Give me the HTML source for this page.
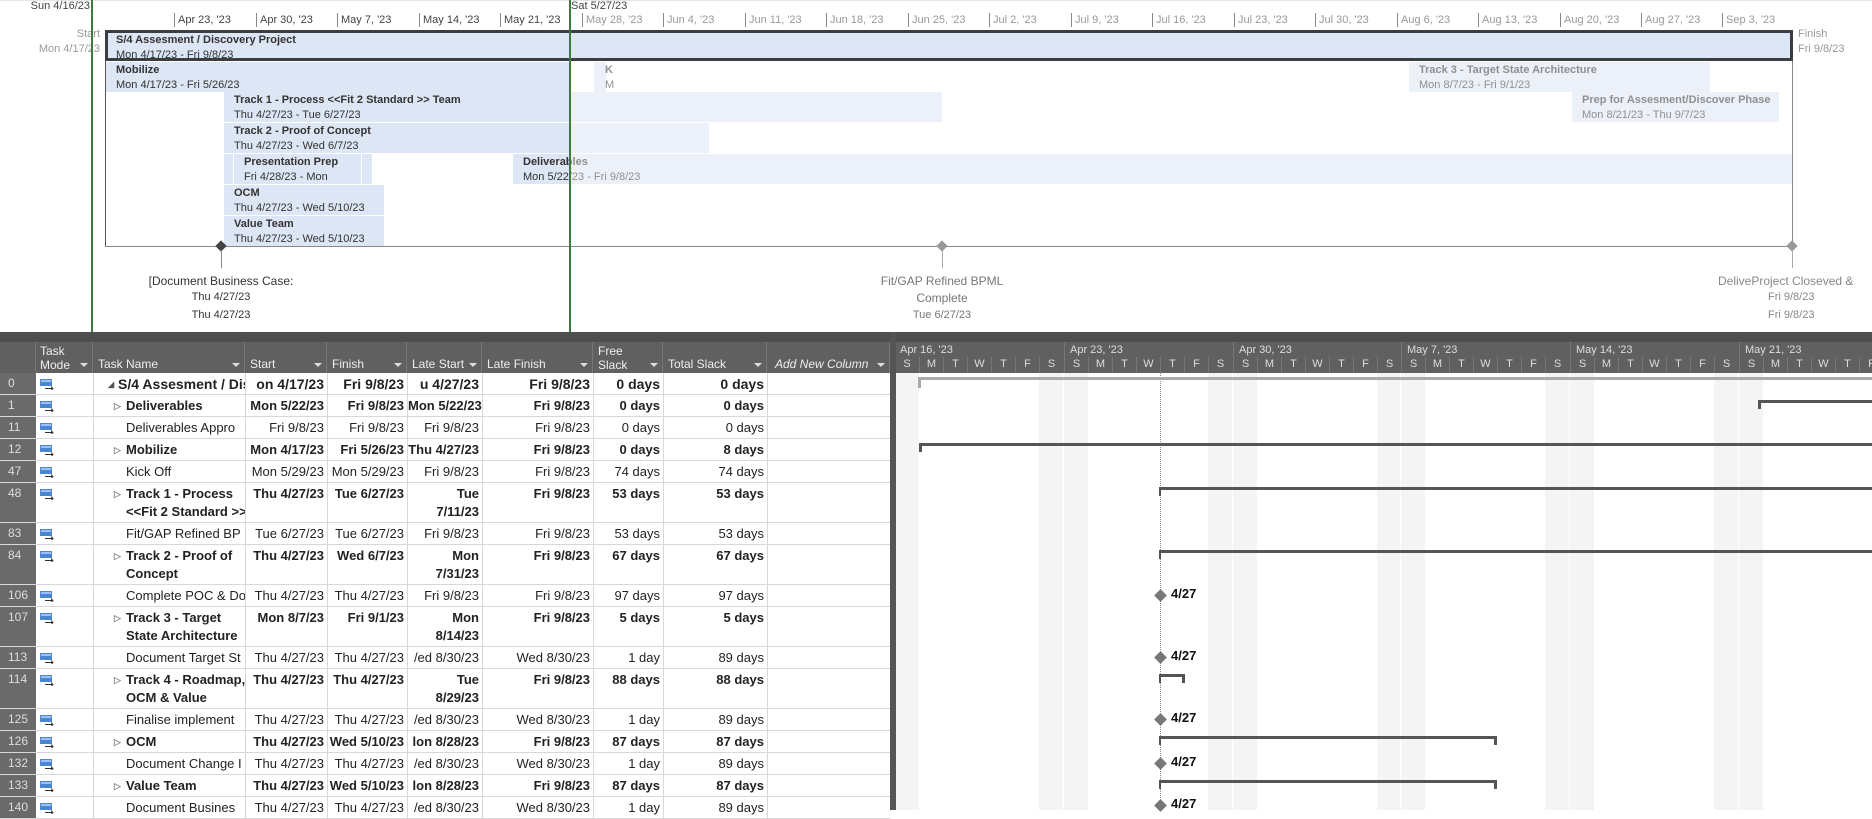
<!DOCTYPE html>
<html><head><meta charset="utf-8"><style>
*{margin:0;padding:0;box-sizing:border-box}
body{width:1872px;height:810px;overflow:hidden;background:#fff;font-family:"Liberation Sans",sans-serif;position:relative}
.a{position:absolute}
.bar{position:absolute;background:#dce6f4;font-size:11px;color:#333;padding-left:10px;line-height:15px;padding-top:1px;overflow:hidden;white-space:nowrap}
.bar b{display:block;font-weight:bold}
.dl{position:absolute;top:13px;font-size:11px;color:#444;padding-left:3px;border-left:1px solid #888;height:14px;line-height:14px;white-space:nowrap}
.g{color:#999}
.lbl{position:absolute;font-size:12px;color:#555;text-align:center;white-space:nowrap}
.hd{position:absolute;top:342px;height:31px;background:#606060;color:#eee;font-size:12px}
.hc{position:absolute;top:342px;height:31px;color:#eee;font-size:12px;line-height:14px;border-right:1px solid #777}
.hc i.dd{position:absolute;right:4px;bottom:6px;width:0;height:0;border-left:4px solid transparent;border-right:4px solid transparent;border-top:4px solid #ddd}
.row{position:absolute;left:0;width:890px;border-bottom:1px solid #d8d8d8;font-size:13px;line-height:18px;color:#222}
.row div{position:absolute;top:2px;white-space:nowrap;overflow:hidden}
.id{left:0;width:36px;top:0!important;height:100%;background:#6a6a6a;color:#ddd;padding-left:8px;padding-top:1px;font-size:12px}
.ic{left:40px;width:15px;height:12px;top:5px!important}
.nm{left:93px;width:152px;padding-left:32px;border-left:1px solid #d8d8d8;top:0!important;height:100%;padding-top:2px}
.c{text-align:right;top:0!important;height:100%;padding-top:2px;border-left:1px solid #d8d8d8;padding-right:3px}
.s{left:245px;width:82px}.f{left:327px;width:80px}.ls{left:407px;width:75px}.lf{left:482px;width:111px}.fs{left:593px;width:70px}.ts{left:663px;width:104px}.ad{left:767px;width:123px}
.bd{font-weight:bold}
.tri{position:absolute;left:115px;font-size:9px;color:#888}
.day{position:absolute;top:357px;width:24px;height:16px;font-size:11px;color:#ddd;text-align:center;border-left:1px solid #777;line-height:15px}
.wk{position:absolute;top:342px;font-size:11px;color:#ddd;padding-left:5px;height:15px;line-height:16px;border-left:1px solid #777}
.hl{position:absolute;height:3px;background:#555}
.tk{position:absolute;width:3px;height:9px;background:#555}
.dm{position:absolute;width:9px;height:9px;background:#777;transform:rotate(45deg)}
.mt{position:absolute;font-size:13px;font-weight:bold;color:#111}
</style></head><body>

<!-- TIMELINE -->
<div class="a" style="left:0;top:0;width:1872px;height:1px;background:#e6e6e6"></div>
<div class="a" style="left:0;top:0;width:92px;font-size:11px;color:#444;text-align:right;padding-right:2px">Sun 4/16/23</div>
<div class="a" style="left:571px;top:0;font-size:11px;color:#444">Sat 5/27/23</div>

<div class="dl" style="left:174px">Apr 23, '23</div>
<div class="dl" style="left:256px">Apr 30, '23</div>
<div class="dl" style="left:337px">May 7, '23</div>
<div class="dl" style="left:419px">May 14, '23</div>
<div class="dl" style="left:500px">May 21, '23</div>
<div class="dl g" style="left:582px">May 28, '23</div>
<div class="dl g" style="left:663px">Jun 4, '23</div>
<div class="dl g" style="left:745px">Jun 11, '23</div>
<div class="dl g" style="left:826px">Jun 18, '23</div>
<div class="dl g" style="left:908px">Jun 25, '23</div>
<div class="dl g" style="left:989px">Jul 2, '23</div>
<div class="dl g" style="left:1071px">Jul 9, '23</div>
<div class="dl g" style="left:1152px">Jul 16, '23</div>
<div class="dl g" style="left:1234px">Jul 23, '23</div>
<div class="dl g" style="left:1315px">Jul 30, '23</div>
<div class="dl g" style="left:1397px">Aug 6, '23</div>
<div class="dl g" style="left:1478px">Aug 13, '23</div>
<div class="dl g" style="left:1560px">Aug 20, '23</div>
<div class="dl g" style="left:1641px">Aug 27, '23</div>
<div class="dl g" style="left:1722px">Sep 3, '23</div>

<div class="a" style="left:0;top:27px;width:100px;font-size:11px;color:#999;text-align:right;line-height:15px">Start<br>Mon 4/17/23</div>
<div class="a" style="left:1798px;top:27px;font-size:11px;color:#999;line-height:15px">Finish<br>Fri 9/8/23</div>

<!-- outline -->
<div class="a" style="left:105px;top:30px;width:1px;height:217px;background:#555"></div>
<div class="a" style="left:105px;top:246px;width:1688px;height:1px;background:#888"></div>
<div class="a" style="left:1792px;top:30px;width:1px;height:217px;background:#888"></div>

<div class="bar" style="left:105px;top:30px;width:1688px;height:31px;border:3px solid #3a3d42;padding-left:8px;padding-top:0"><b>S/4 Assesment / Discovery Project</b>Mon 4/17/23 - Fri 9/8/23</div>
<div class="bar" style="left:106px;top:62px;width:464px;height:30px"><b>Mobilize</b>Mon 4/17/23 - Fri 5/26/23</div>
<div class="bar" style="left:594px;top:62px;width:12px;height:30px;padding-left:11px;overflow:visible"><b>K</b>M</div>
<div class="bar" style="left:1409px;top:62px;width:301px;height:30px"><b>Track 3 - Target State Architecture</b>Mon 8/7/23 - Fri 9/1/23</div>
<div class="bar" style="left:224px;top:92px;width:718px;height:30px"><b>Track 1 - Process &lt;&lt;Fit 2 Standard &gt;&gt; Team</b>Thu 4/27/23 - Tue 6/27/23</div>
<div class="bar" style="left:1572px;top:92px;width:207px;height:30px"><b>Prep for Assesment/Discover Phase</b>Mon 8/21/23 - Thu 9/7/23</div>
<div class="bar" style="left:224px;top:123px;width:485px;height:30px"><b>Track 2 - Proof of Concept</b>Thu 4/27/23 - Wed 6/7/23</div>
<div class="bar" style="left:224px;top:154px;width:148px;height:30px;padding-left:20px"><b>Presentation Prep</b>Fri 4/28/23 - Mon</div>
<div class="a" style="left:361px;top:154px;width:1px;height:30px;background:#fff"></div>
<div class="a" style="left:233px;top:154px;width:1px;height:30px;background:#fff"></div>
<div class="bar" style="left:513px;top:154px;width:1279px;height:30px"><b>Deliverables</b>Mon 5/22/23 - Fri 9/8/23</div>
<div class="bar" style="left:224px;top:185px;width:160px;height:30px"><b>OCM</b>Thu 4/27/23 - Wed 5/10/23</div>
<div class="bar" style="left:224px;top:216px;width:160px;height:30px"><b>Value Team</b>Thu 4/27/23 - Wed 5/10/23</div>

<!-- fade overlays -->
<div class="a" style="left:571px;top:62px;width:1221px;height:184px;background:rgba(255,255,255,0.45)"></div>

<!-- green lines -->
<div class="a" style="left:91px;top:0;width:2px;height:332px;background:#3d7a3d"></div>
<div class="a" style="left:569px;top:0;width:2px;height:332px;background:#3d7a3d"></div>

<!-- milestones -->
<div class="a" style="left:217px;top:242px;width:8px;height:8px;background:#444;transform:rotate(45deg)"></div>
<div class="a" style="left:221px;top:250px;width:1px;height:18px;background:#888"></div>
<div class="a" style="left:938px;top:242px;width:8px;height:8px;background:#999;transform:rotate(45deg)"></div>
<div class="a" style="left:942px;top:250px;width:1px;height:18px;background:#aaa"></div>
<div class="a" style="left:1788px;top:242px;width:8px;height:8px;background:#999;transform:rotate(45deg)"></div>
<div class="a" style="left:1792px;top:250px;width:1px;height:18px;background:#aaa"></div>

<div class="lbl" style="left:121px;top:274px;width:200px;color:#333">[Document Business Case:</div>
<div class="lbl" style="left:121px;top:291px;width:200px;font-size:11px;color:#333">Thu 4/27/23</div>
<div class="lbl" style="left:121px;top:309px;width:200px;font-size:11px;color:#333">Thu 4/27/23</div>
<div class="lbl" style="left:842px;top:274px;width:200px;color:#777">Fit/GAP Refined BPML</div>
<div class="lbl" style="left:842px;top:291px;width:200px;color:#777">Complete</div>
<div class="lbl" style="left:842px;top:309px;width:200px;font-size:11px;color:#777">Tue 6/27/23</div>
<div class="lbl" style="left:1718px;top:274px;color:#888;text-align:left">DeliveProject Closeved &amp;</div>
<div class="lbl" style="left:1768px;top:291px;font-size:11px;color:#888;text-align:left">Fri 9/8/23</div>
<div class="lbl" style="left:1768px;top:309px;font-size:11px;color:#888;text-align:left">Fri 9/8/23</div>

<!-- separator -->
<div class="a" style="left:0;top:332px;width:1872px;height:10px;background:#4e4e4e"></div>
<div class="a" style="left:890px;top:332px;width:6px;height:478px;background:#555"></div>

<!-- table header -->
<div class="hd" style="left:0;width:890px"></div>
<div class="hc" style="left:0;width:36px"></div>
<div class="hc" style="left:36px;width:57px;padding:2px 0 0 4px">Task<br>Mode<i class="dd"></i></div>
<div class="hc" style="left:93px;width:152px;padding:15px 0 0 5px">Task Name<i class="dd"></i></div>
<div class="hc" style="left:245px;width:82px;padding:15px 0 0 5px">Start<i class="dd"></i></div>
<div class="hc" style="left:327px;width:80px;padding:15px 0 0 5px">Finish<i class="dd"></i></div>
<div class="hc" style="left:407px;width:75px;padding:15px 0 0 5px">Late Start<i class="dd"></i></div>
<div class="hc" style="left:482px;width:111px;padding:15px 0 0 5px">Late Finish<i class="dd"></i></div>
<div class="hc" style="left:593px;width:70px;padding:2px 0 0 5px">Free<br>Slack<i class="dd"></i></div>
<div class="hc" style="left:663px;width:104px;padding:15px 0 0 5px">Total Slack<i class="dd"></i></div>
<div class="hc" style="left:767px;width:123px;padding:15px 0 0 8px;font-style:italic">Add New Column<i class="dd"></i></div>

<!-- gantt header -->
<div class="hd" style="left:896px;width:976px"></div>
<div class="wk" style="left:895px;border-left:none">Apr 16, '23</div>
<div class="wk" style="left:1064px">Apr 23, '23</div>
<div class="wk" style="left:1233px">Apr 30, '23</div>
<div class="wk" style="left:1401px">May 7, '23</div>
<div class="wk" style="left:1570px">May 14, '23</div>
<div class="wk" style="left:1739px">May 21, '23</div>
<div class="day" style="left:895px;border-left:none">S</div><div class="day" style="left:919px">M</div><div class="day" style="left:943px">T</div><div class="day" style="left:967px">W</div><div class="day" style="left:991px">T</div><div class="day" style="left:1015px">F</div><div class="day" style="left:1039px">S</div>
<div class="day" style="left:1064px">S</div><div class="day" style="left:1088px">M</div><div class="day" style="left:1112px">T</div><div class="day" style="left:1136px">W</div><div class="day" style="left:1160px">T</div><div class="day" style="left:1184px">F</div><div class="day" style="left:1208px">S</div>
<div class="day" style="left:1233px">S</div><div class="day" style="left:1257px">M</div><div class="day" style="left:1281px">T</div><div class="day" style="left:1305px">W</div><div class="day" style="left:1329px">T</div><div class="day" style="left:1353px">F</div><div class="day" style="left:1377px">S</div>
<div class="day" style="left:1401px">S</div><div class="day" style="left:1425px">M</div><div class="day" style="left:1449px">T</div><div class="day" style="left:1473px">W</div><div class="day" style="left:1497px">T</div><div class="day" style="left:1521px">F</div><div class="day" style="left:1545px">S</div>
<div class="day" style="left:1570px">S</div><div class="day" style="left:1594px">M</div><div class="day" style="left:1618px">T</div><div class="day" style="left:1642px">W</div><div class="day" style="left:1666px">T</div><div class="day" style="left:1690px">F</div><div class="day" style="left:1714px">S</div>
<div class="day" style="left:1739px">S</div><div class="day" style="left:1763px">M</div><div class="day" style="left:1787px">T</div><div class="day" style="left:1811px">W</div><div class="day" style="left:1835px">T</div><div class="day" style="left:1859px">F</div>

<!-- weekend shading -->
<div class="a" style="left:896px;top:373px;width:23px;height:437px;background:#f4f4f4"></div>
<div class="a" style="left:1039px;top:373px;width:49px;height:437px;background:#f4f4f4"></div>
<div class="a" style="left:1208px;top:373px;width:49px;height:437px;background:#f4f4f4"></div>
<div class="a" style="left:1377px;top:373px;width:48px;height:437px;background:#f4f4f4"></div>
<div class="a" style="left:1545px;top:373px;width:49px;height:437px;background:#f4f4f4"></div>
<div class="a" style="left:1714px;top:373px;width:49px;height:437px;background:#f4f4f4"></div>
<div class="a" style="left:1063px;top:373px;width:1px;height:437px;background:#fff"></div>
<div class="a" style="left:1232px;top:373px;width:1px;height:437px;background:#fff"></div>
<div class="a" style="left:1400px;top:373px;width:1px;height:437px;background:#fff"></div>
<div class="a" style="left:1569px;top:373px;width:1px;height:437px;background:#fff"></div>
<div class="a" style="left:1738px;top:373px;width:1px;height:437px;background:#fff"></div>
<div class="a" style="left:1160px;top:373px;width:0;height:437px;border-left:1px dotted #888"></div>

<!-- gantt bars -->
<div class="hl" style="left:918px;top:377px;width:954px;background:#aaa"></div><div class="tk" style="left:918px;top:377px;height:11px;background:#aaa"></div>
<div class="hl" style="left:1758px;top:400px;width:114px"></div><div class="tk" style="left:1758px;top:400px"></div>
<div class="hl" style="left:919px;top:443px;width:953px"></div><div class="tk" style="left:919px;top:443px"></div>
<div class="hl" style="left:1159px;top:487px;width:713px"></div><div class="tk" style="left:1159px;top:487px;width:2px"></div>
<div class="hl" style="left:1159px;top:550px;width:713px"></div><div class="tk" style="left:1159px;top:550px;width:2px"></div>
<div class="hl" style="left:1159px;top:674px;width:26px"></div><div class="tk" style="left:1159px;top:674px;width:2px"></div><div class="tk" style="left:1182px;top:674px"></div>
<div class="hl" style="left:1159px;top:736px;width:338px"></div><div class="tk" style="left:1159px;top:736px;width:2px"></div><div class="tk" style="left:1494px;top:736px"></div>
<div class="hl" style="left:1159px;top:780px;width:338px"></div><div class="tk" style="left:1159px;top:780px;width:2px"></div><div class="tk" style="left:1494px;top:780px"></div>
<div class="dm" style="left:1156px;top:591px"></div><div class="mt" style="left:1171px;top:586px">4/27</div>
<div class="dm" style="left:1156px;top:653px"></div><div class="mt" style="left:1171px;top:648px">4/27</div>
<div class="dm" style="left:1156px;top:715px"></div><div class="mt" style="left:1171px;top:710px">4/27</div>
<div class="dm" style="left:1156px;top:759px"></div><div class="mt" style="left:1171px;top:754px">4/27</div>
<div class="dm" style="left:1156px;top:801px"></div><div class="mt" style="left:1171px;top:796px">4/27</div>

<!-- table rows -->
<svg width="0" height="0" style="position:absolute"><defs><symbol id="mi" viewBox="0 0 15 12"><rect x="0" y="1" width="12" height="7" fill="#4a86d4"/><rect x="1" y="2" width="10" height="2" fill="#9cc3ef"/><path d="M5 10.5h8M11 8.5l2 2-2 2" stroke="#333" stroke-width="1" fill="none"/></symbol></defs></svg>

<div class="row" style="top:373px;height:22px;font-size:14px"><div class="id">0</div><svg class="ic a" style="left:40px;top:5px" width="15" height="12"><use href="#mi"/></svg><div class="nm bd" style="padding-left:14px"><span style="font-size:8px;color:#555;position:relative;top:-2px">◢</span> S/4 Assesment / Dis</div><div class="c s bd">on 4/17/23</div><div class="c f bd">Fri 9/8/23</div><div class="c ls bd">u 4/27/23</div><div class="c lf bd">Fri 9/8/23</div><div class="c fs bd">0 days</div><div class="c ts bd">0 days</div><div class="c ad"></div></div>

<div class="row" style="top:395px;height:22px"><div class="id">1</div><svg class="a" style="left:40px;top:5px" width="15" height="12"><use href="#mi"/></svg><div class="nm bd"><span class="tri" style="left:20px">▷</span>Deliverables</div><div class="c s bd">Mon 5/22/23</div><div class="c f bd">Fri 9/8/23</div><div class="c ls bd">Mon 5/22/23</div><div class="c lf bd">Fri 9/8/23</div><div class="c fs bd">0 days</div><div class="c ts bd">0 days</div><div class="c ad"></div></div>

<div class="row" style="top:417px;height:22px"><div class="id">11</div><svg class="a" style="left:40px;top:5px" width="15" height="12"><use href="#mi"/></svg><div class="nm">Deliverables Appro</div><div class="c s">Fri 9/8/23</div><div class="c f">Fri 9/8/23</div><div class="c ls">Fri 9/8/23</div><div class="c lf">Fri 9/8/23</div><div class="c fs">0 days</div><div class="c ts">0 days</div><div class="c ad"></div></div>

<div class="row" style="top:439px;height:22px"><div class="id">12</div><svg class="a" style="left:40px;top:5px" width="15" height="12"><use href="#mi"/></svg><div class="nm bd"><span class="tri" style="left:20px">▷</span>Mobilize</div><div class="c s bd">Mon 4/17/23</div><div class="c f bd">Fri 5/26/23</div><div class="c ls bd">Thu 4/27/23</div><div class="c lf bd">Fri 9/8/23</div><div class="c fs bd">0 days</div><div class="c ts bd">8 days</div><div class="c ad"></div></div>

<div class="row" style="top:461px;height:22px"><div class="id">47</div><svg class="a" style="left:40px;top:5px" width="15" height="12"><use href="#mi"/></svg><div class="nm">Kick Off</div><div class="c s">Mon 5/29/23</div><div class="c f">Mon 5/29/23</div><div class="c ls">Fri 9/8/23</div><div class="c lf">Fri 9/8/23</div><div class="c fs">74 days</div><div class="c ts">74 days</div><div class="c ad"></div></div>

<div class="row" style="top:483px;height:40px"><div class="id">48</div><svg class="a" style="left:40px;top:5px" width="15" height="12"><use href="#mi"/></svg><div class="nm bd"><span class="tri" style="left:20px">▷</span>Track 1 - Process<br>&lt;&lt;Fit 2 Standard &gt;&gt;</div><div class="c s bd">Thu 4/27/23</div><div class="c f bd">Tue 6/27/23</div><div class="c ls bd">Tue<br>7/11/23</div><div class="c lf bd">Fri 9/8/23</div><div class="c fs bd">53 days</div><div class="c ts bd">53 days</div><div class="c ad"></div></div>

<div class="row" style="top:523px;height:22px"><div class="id">83</div><svg class="a" style="left:40px;top:5px" width="15" height="12"><use href="#mi"/></svg><div class="nm">Fit/GAP Refined BP</div><div class="c s">Tue 6/27/23</div><div class="c f">Tue 6/27/23</div><div class="c ls">Fri 9/8/23</div><div class="c lf">Fri 9/8/23</div><div class="c fs">53 days</div><div class="c ts">53 days</div><div class="c ad"></div></div>

<div class="row" style="top:545px;height:40px"><div class="id">84</div><svg class="a" style="left:40px;top:5px" width="15" height="12"><use href="#mi"/></svg><div class="nm bd"><span class="tri" style="left:20px">▷</span>Track 2 - Proof of<br>Concept</div><div class="c s bd">Thu 4/27/23</div><div class="c f bd">Wed 6/7/23</div><div class="c ls bd">Mon<br>7/31/23</div><div class="c lf bd">Fri 9/8/23</div><div class="c fs bd">67 days</div><div class="c ts bd">67 days</div><div class="c ad"></div></div>

<div class="row" style="top:585px;height:22px"><div class="id">106</div><svg class="a" style="left:40px;top:5px" width="15" height="12"><use href="#mi"/></svg><div class="nm">Complete POC &amp; Do</div><div class="c s">Thu 4/27/23</div><div class="c f">Thu 4/27/23</div><div class="c ls">Fri 9/8/23</div><div class="c lf">Fri 9/8/23</div><div class="c fs">97 days</div><div class="c ts">97 days</div><div class="c ad"></div></div>

<div class="row" style="top:607px;height:40px"><div class="id">107</div><svg class="a" style="left:40px;top:5px" width="15" height="12"><use href="#mi"/></svg><div class="nm bd"><span class="tri" style="left:20px">▷</span>Track 3 - Target<br>State Architecture</div><div class="c s bd">Mon 8/7/23</div><div class="c f bd">Fri 9/1/23</div><div class="c ls bd">Mon<br>8/14/23</div><div class="c lf bd">Fri 9/8/23</div><div class="c fs bd">5 days</div><div class="c ts bd">5 days</div><div class="c ad"></div></div>

<div class="row" style="top:647px;height:22px"><div class="id">113</div><svg class="a" style="left:40px;top:5px" width="15" height="12"><use href="#mi"/></svg><div class="nm">Document Target St</div><div class="c s">Thu 4/27/23</div><div class="c f">Thu 4/27/23</div><div class="c ls">/ed 8/30/23</div><div class="c lf">Wed 8/30/23</div><div class="c fs">1 day</div><div class="c ts">89 days</div><div class="c ad"></div></div>

<div class="row" style="top:669px;height:40px"><div class="id">114</div><svg class="a" style="left:40px;top:5px" width="15" height="12"><use href="#mi"/></svg><div class="nm bd"><span class="tri" style="left:20px">▷</span>Track 4 - Roadmap,<br>OCM &amp; Value</div><div class="c s bd">Thu 4/27/23</div><div class="c f bd">Thu 4/27/23</div><div class="c ls bd">Tue<br>8/29/23</div><div class="c lf bd">Fri 9/8/23</div><div class="c fs bd">88 days</div><div class="c ts bd">88 days</div><div class="c ad"></div></div>

<div class="row" style="top:709px;height:22px"><div class="id">125</div><svg class="a" style="left:40px;top:5px" width="15" height="12"><use href="#mi"/></svg><div class="nm">Finalise implement</div><div class="c s">Thu 4/27/23</div><div class="c f">Thu 4/27/23</div><div class="c ls">/ed 8/30/23</div><div class="c lf">Wed 8/30/23</div><div class="c fs">1 day</div><div class="c ts">89 days</div><div class="c ad"></div></div>

<div class="row" style="top:731px;height:22px"><div class="id">126</div><svg class="a" style="left:40px;top:5px" width="15" height="12"><use href="#mi"/></svg><div class="nm bd"><span class="tri" style="left:20px">▷</span>OCM</div><div class="c s bd">Thu 4/27/23</div><div class="c f bd">Wed 5/10/23</div><div class="c ls bd">lon 8/28/23</div><div class="c lf bd">Fri 9/8/23</div><div class="c fs bd">87 days</div><div class="c ts bd">87 days</div><div class="c ad"></div></div>

<div class="row" style="top:753px;height:22px"><div class="id">132</div><svg class="a" style="left:40px;top:5px" width="15" height="12"><use href="#mi"/></svg><div class="nm">Document Change I</div><div class="c s">Thu 4/27/23</div><div class="c f">Thu 4/27/23</div><div class="c ls">/ed 8/30/23</div><div class="c lf">Wed 8/30/23</div><div class="c fs">1 day</div><div class="c ts">89 days</div><div class="c ad"></div></div>

<div class="row" style="top:775px;height:22px"><div class="id">133</div><svg class="a" style="left:40px;top:5px" width="15" height="12"><use href="#mi"/></svg><div class="nm bd"><span class="tri" style="left:20px">▷</span>Value Team</div><div class="c s bd">Thu 4/27/23</div><div class="c f bd">Wed 5/10/23</div><div class="c ls bd">lon 8/28/23</div><div class="c lf bd">Fri 9/8/23</div><div class="c fs bd">87 days</div><div class="c ts bd">87 days</div><div class="c ad"></div></div>

<div class="row" style="top:797px;height:22px"><div class="id">140</div><svg class="a" style="left:40px;top:5px" width="15" height="12"><use href="#mi"/></svg><div class="nm">Document Busines</div><div class="c s">Thu 4/27/23</div><div class="c f">Thu 4/27/23</div><div class="c ls">/ed 8/30/23</div><div class="c lf">Wed 8/30/23</div><div class="c fs">1 day</div><div class="c ts">89 days</div><div class="c ad"></div></div>

</body></html>
